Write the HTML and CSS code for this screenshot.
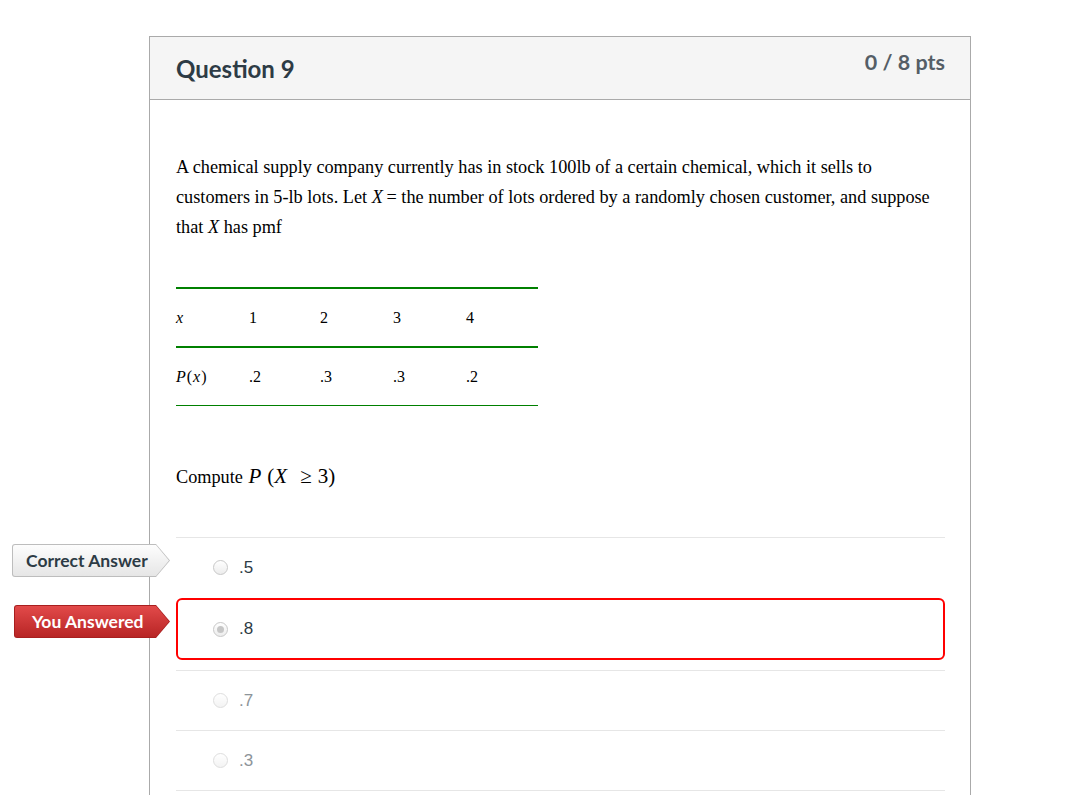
FILE: index.html
```html
<!DOCTYPE html>
<html>
<head>
<meta charset="utf-8">
<link rel="stylesheet" href="styles.css">
</head>
<body>
<div class="card">
  <div class="card-header">
    <h2 class="q-title">Question 9</h2>
    <div class="q-points">0 / 8 pts</div>
  </div>
  <div class="card-body">
    <p class="q-text">A chemical supply company currently has in stock 100lb of a certain chemical, which it sells to customers in 5-lb lots. Let <i>X</i>&thinsp;= the number of lots ordered by a randomly chosen customer, and suppose that <i>X</i> has pmf</p>
    <table class="pmf">
      <colgroup><col class="c1"><col class="c2"><col class="c3"><col class="c4"><col class="c5"></colgroup>
      <tr><td><i>x</i></td><td>1</td><td>2</td><td>3</td><td>4</td></tr>
      <tr><td><i>P</i>(<i>x</i>)</td><td>.2</td><td>.3</td><td>.3</td><td>.2</td></tr>
    </table>
    <p class="q-compute">Compute <span class="math"><i>P</i><span class="sp"></span>(<i>X</i><span class="sp2"></span>≥<span class="sp3"></span>3)</span></p>
    <div class="answers">
      <div class="answer">
        <div class="tag tag-correct"><span>Correct Answer</span></div>
        <span class="radio"></span><span class="ans-text">.5</span>
      </div>
      <div class="answer selected">
        <div class="tag tag-wrong"><span>You Answered</span></div>
        <span class="radio checked"></span><span class="ans-text">.8</span>
      </div>
      <div class="answer faded">
        <span class="radio"></span><span class="ans-text">.7</span>
      </div>
      <div class="answer faded last">
        <span class="radio"></span><span class="ans-text">.3</span>
      </div>
    </div>
  </div>
</div>
</body>
</html>
```

FILE: styles.css
```css
html, body {
  margin: 0;
  padding: 0;
  background: #fff;
  height: 795px;
  overflow: hidden;
}
.card {
  margin: 36px 0 0 149px;
  width: 822px;
  box-sizing: border-box;
  border: 1px solid #aaaaaa;
  border-bottom: none;
  height: 759px;
}
.card-header {
  display: flex;
  justify-content: space-between;
  align-items: flex-start;
  height: 62px;
  background: #f5f5f5;
  border-bottom: 1px solid #aaaaaa;
  padding: 0 25px 0 26px;
}
.q-title {
  margin: 18px 0 0;
  font-family: Lato, "Liberation Sans", sans-serif;
  font-weight: 700;
  font-size: 24px;
  line-height: 1.2;
  color: #2d3b45;
}
.q-points {
  margin-top: 13px;
  font-family: Lato, "Liberation Sans", sans-serif;
  font-weight: 700;
  font-size: 21.5px;
  line-height: 1.2;
  color: #555e66;
}
.card-body {
  padding: 52px 25px 0 26px;
  font-family: "Liberation Serif", "Times New Roman", serif;
  color: #000;
}
.q-text {
  margin: 0;
  font-size: 18.25px;
  line-height: 30px;
}
.pmf {
  margin-top: 45px;
  border-collapse: collapse;
  width: 362px;
  font-size: 16px;
  table-layout: fixed;
}
.pmf .c1 { width: 73px; }
.pmf .c2 { width: 71px; }
.pmf .c3 { width: 73px; }
.pmf .c4 { width: 73px; }
.pmf .c5 { width: 72px; }
.pmf tr { border-top: 2px solid #008000; }
.pmf tr:last-child { border-bottom: 1px solid #008000; }
.pmf td {
  height: 57px;
  padding: 0;
  vertical-align: middle;
  text-align: left;
}
.pmf td:first-child { letter-spacing: 1px; }
.q-compute {
  margin: 55px 0 0;
  font-size: 18.25px;
  line-height: 30px;
}
.math {
  font-size: 21px;
  margin-left: 1px;
}
.math .sp { display: inline-block; width: 6px; }
.math .sp2 { display: inline-block; width: 13px; }
.math .sp3 { display: inline-block; width: 6px; }
.answers {
  margin-top: 45px;
}
.answer {
  position: relative;
  display: flex;
  align-items: center;
  height: 59px;
  border-top: 1px solid #e6e6e6;
  padding-left: 37px;
  font-family: "Liberation Sans", Arial, sans-serif;
  font-size: 17px;
  color: #2d3b45;
}
.answer.last {
  border-bottom: 1px solid #e6e6e6;
}
.answer.selected {
  height: 58px;
  border: 2px solid #ff0000;
  border-radius: 6px;
  padding-left: 35px;
  margin-top: 1px;
  margin-bottom: 10px;
}
.answer.faded { color: #8d9499; }
.radio {
  width: 13px;
  height: 13px;
  border-radius: 50%;
  border: 1px solid #c8c8c8;
  background: linear-gradient(#ffffff, #ececec);
  position: relative;
  flex: none;
}
.radio.checked::after {
  content: "";
  position: absolute;
  left: 3px;
  top: 3px;
  width: 7px;
  height: 7px;
  border-radius: 50%;
  background: #c6c6c6;
}
.answer.faded .radio {
  border-color: #dedede;
  background: linear-gradient(#ffffff, #f3f3f3);
}
.ans-text {
  margin-left: 11px;
}
.tag {
  position: absolute;
  height: 33px;
  clip-path: polygon(0 0, calc(100% - 14px) 0, 100% 50%, calc(100% - 14px) 100%, 0 100%);
  border-radius: 3px 0 0 3px;
  font-family: Lato, "Liberation Sans", sans-serif;
  font-weight: 700;
  font-size: 17.5px;
  display: flex;
  align-items: center;
}
.tag::before {
  content: "";
  position: absolute;
  inset: 1px;
  clip-path: polygon(0 0, calc(100% - 13px) 0, 100% 50%, calc(100% - 13px) 100%, 0 100%);
  border-radius: 2px 0 0 2px;
}
.tag span { position: relative; }
.tag-correct {
  left: -164px;
  top: 6px;
  width: 158px;
  background: #bdbdbd;
  color: #2d3b45;
  padding-left: 14px;
  box-sizing: border-box;
}
.tag-correct::before {
  background: linear-gradient(#fdfdfd, #e6e6e6);
}
.tag-wrong {
  left: -164px;
  top: 5px;
  width: 156px;
  background: #a81f1f;
  color: #fff;
  padding-left: 18px;
  box-sizing: border-box;
}
.tag-wrong::before {
  background: linear-gradient(#e24a4a, #b82525);
}
```
